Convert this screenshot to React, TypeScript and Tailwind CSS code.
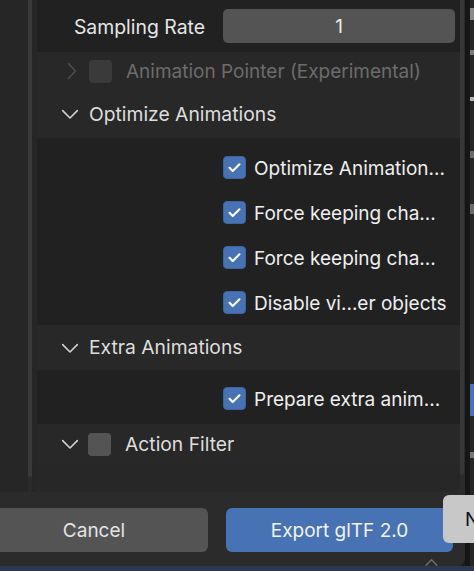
import type { ReactNode } from "react";

function Check() {
  return (
    <svg viewBox="0 0 24 24" className="h-[17px] w-[17px]">
      <path d="M5 12.5l4.5 4.5L19 7.5" fill="none" stroke="#ffffff" strokeWidth="3" strokeLinecap="round" strokeLinejoin="round" />
    </svg>
  );
}

function Chevron({ dir, dim }: { dir: "down" | "right"; dim?: boolean }) {
  return (
    <svg viewBox="0 0 16 16" className="h-[18px] w-[18px]">
      <path
        d={dir === "down" ? "M1.5 5L8 11.5 14.5 5" : "M5 1.5L11 8l-6 6.5"}
        fill="none"
        stroke={dim ? "#4e4e4e" : "#d2d2d2"}
        strokeWidth="1.4"
        strokeLinecap="round"
        strokeLinejoin="round"
      />
    </svg>
  );
}

function CheckRow({ label }: { label: string }) {
  return (
    <div className="flex h-[45px] items-center">
      <div className="w-[186px] shrink-0" />
      <div className="flex h-[23px] w-[23px] items-center justify-center rounded-[4px] border border-[#3e649f] bg-[#4772b3]">
        <Check />
      </div>
      <span className="ml-[8px] pt-[1px] text-[19px] text-[#efefef]">{label}</span>
    </div>
  );
}

function Header({ children, h }: { children: ReactNode; h: string }) {
  return <div className={`flex items-center bg-[#282828] ${h}`}>{children}</div>;
}

export default function App() {
  return (
    <div className="relative h-[571px] w-[474px] overflow-hidden bg-[#1c1c1c] font-[Inter,sans-serif] leading-none">
      <div className="flex h-[566px]">
        {/* dialog */}
        <div className="flex w-[465px] flex-col rounded-br-[8px] bg-[#2b2b2b]">
          <div className="flex h-[492px]">
            <div className="w-[28px] bg-[#262626]" />
            <div className="h-[477px] w-[4px] rounded-b-[2px] bg-[#3a3a3a]" />
            <div className="w-[5px] bg-[#262626]" />

            {/* panel */}
            <div className="flex w-[423px] flex-col overflow-hidden rounded-b-[8px] bg-[#272727]">
              <div className="flex h-[52px] items-center bg-[#212121]">
                <div className="w-[176px] pr-[8px] pt-[3px] text-right text-[19.4px] text-[#e6e6e6]">Sampling Rate</div>
                <div className="ml-[10px] flex h-[34px] w-[232px] items-center justify-center rounded-[5px] bg-[#545454] text-[19px] text-[#ececec]">
                  1
                </div>
              </div>

              <Header h="h-[38px]">
                <div className="ml-[26px]">
                  <Chevron dir="right" dim />
                </div>
                <div className="ml-[8px] h-[23px] w-[23px] rounded-[4px] bg-[#3a3a3a]" />
                <span className="ml-[14px] text-[19px] text-[#6c6c6c]">Animation Pointer (Experimental)</span>
              </Header>

              <Header h="h-[48px]">
                <div className="ml-[24px]">
                  <Chevron dir="down" />
                </div>
                <span className="ml-[10px] pt-[1px] text-[19.3px] text-[#dedede]">Optimize Animations</span>
              </Header>

              <div className="h-[187px] bg-[#212121] pt-[7px]">
                <CheckRow label="Optimize Animation..." />
                <CheckRow label="Force keeping cha..." />
                <CheckRow label="Force keeping cha..." />
                <CheckRow label="Disable vi...er objects" />
              </div>

              <Header h="h-[45px]">
                <div className="ml-[24px]">
                  <Chevron dir="down" />
                </div>
                <span className="ml-[10px] text-[19.3px] text-[#dedede]">Extra Animations</span>
              </Header>

              <div className="h-[54px] bg-[#212121] pt-[6px]">
                <CheckRow label="Prepare extra anim..." />
              </div>

              <Header h="h-[40px]">
                <div className="ml-[24px]">
                  <Chevron dir="down" />
                </div>
                <div className="ml-[9px] h-[23px] w-[23px] rounded-[4px] bg-[#545454]" />
                <span className="ml-[14px] pt-[2px] text-[19.3px] text-[#dedede]">Action Filter</span>
              </Header>
            </div>

            <div className="h-[475px] w-[4px] rounded-b-[2px] bg-[#373737]" />
          </div>

          {/* buttons */}
          <div className="mt-[16px] flex gap-[18px]">
            <button className="-ml-[20px] flex h-[44px] w-[228px] items-center justify-center rounded-[6px] bg-[#545454] text-[19px] text-[#e4e4e4]">
              Cancel
            </button>
            <button className="flex h-[44px] w-[227px] items-center justify-center rounded-[6px] bg-[#4772b3] text-[19px] text-[#f2f2f2]">
              Export glTF 2.0
            </button>
          </div>
        </div>

        {/* right edge of the window behind */}
        <div className="w-[5px] bg-[#161616]" />
        <div className="flex w-[4px] flex-col bg-[#262626]">
          <div className="mt-[8px] h-[12px] bg-[#8a8a8a]" />
          <div className="mt-[30px] h-[5px] bg-[#7a7a7a]" />
          <div className="mt-[42px] h-[4px] bg-[#b5b5b5]" />
          <div className="mt-[50px] h-[7px] bg-[#6a6a6a]" />
          <div className="mt-[46px] h-[10px] bg-[#6a6a6a]" />
          <div className="mt-[170px] h-[32px] bg-[#4772b3]" />
          <div className="mt-[36px] h-[6px] bg-[#777777]" />
        </div>
      </div>
      <div className="h-[5px] bg-[#2a3950]" />

      {/* tooltip overlapping the button */}
      <div className="absolute left-[443px] top-[495px] flex h-[48px] w-[40px] items-center overflow-hidden rounded-l-[6px] bg-[#c8c8c8] pl-[22px] text-[19px] text-[#111111]">
        N
      </div>

      {/* collapse arrow */}
      <svg viewBox="0 0 16 10" className="absolute left-[424px] top-[558px] h-[9px] w-[15px]">
        <path d="M2 8l6-6 6 6" fill="none" stroke="#6f6f6f" strokeWidth="1.6" strokeLinecap="round" strokeLinejoin="round" />
      </svg>
    </div>
  );
}
